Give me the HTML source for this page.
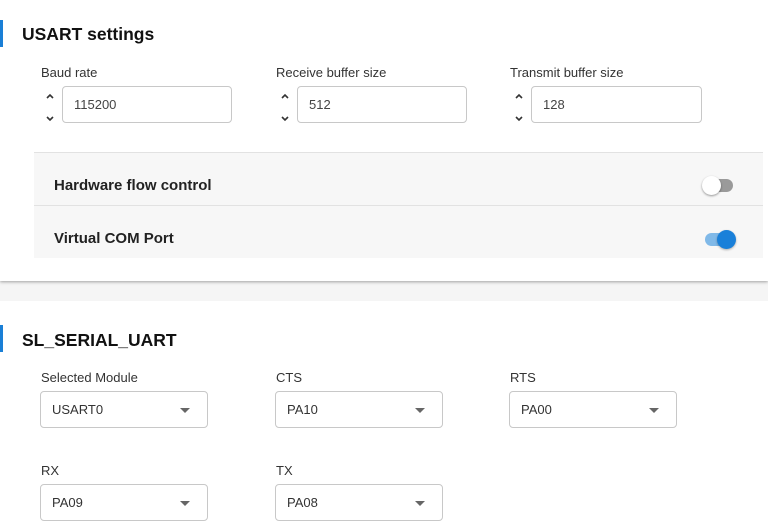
<!DOCTYPE html>
<html><head><style>
*{box-sizing:border-box;margin:0;padding:0}
body{width:768px;height:521px;overflow:hidden;background:#f5f5f5;font-family:"Liberation Sans",sans-serif;color:#222;position:relative}
.card{position:absolute;left:0;width:768px;background:#fff}
.bar{position:absolute;left:0;width:3px;background:#1a7fd6}
.title{position:absolute;left:22px;font-size:17.5px;font-weight:bold;color:#111}
.lbl{position:absolute;font-size:13px;color:#333}
.inp{position:absolute;height:37px;border:1px solid #c8c8c8;border-radius:4px;font-size:13px;color:#444;padding:10px 0 0 11px;background:#fff}
.spin{position:absolute;width:10px;height:34px}
.sel{position:absolute;width:168px;height:37px;border:1px solid #c8c8c8;border-radius:4px;font-size:13px;color:#333;padding:10px 0 0 11px;background:#fff}
.sel:after{content:"";position:absolute;right:17px;top:16px;border-left:5px solid transparent;border-right:5px solid transparent;border-top:5px solid #666}
.row{position:absolute;left:34px;width:729px;background:#f7f7f7;font-size:15px;font-weight:bold;color:#222;padding-left:20px}
</style></head><body>
<div class="card" style="top:0;height:281px;box-shadow:0 1px 3px rgba(0,0,0,.35)">
<div class="bar" style="top:20px;height:27px"></div>
<div class="title" style="top:24px">USART settings</div>
<div class="lbl" style="left:41px;top:65px">Baud rate</div>
<div class="lbl" style="left:276px;top:65px">Receive buffer size</div>
<div class="lbl" style="left:510px;top:65px">Transmit buffer size</div>
<svg class="spin" style="left:45px;top:88px" viewBox="0 0 10 34"><path d="M2 10l3-3 3 3M2 29l3 3 3-3" fill="none" stroke="#333" stroke-width="1.6"/></svg>
<svg class="spin" style="left:280px;top:88px" viewBox="0 0 10 34"><path d="M2 10l3-3 3 3M2 29l3 3 3-3" fill="none" stroke="#333" stroke-width="1.6"/></svg>
<svg class="spin" style="left:514px;top:88px" viewBox="0 0 10 34"><path d="M2 10l3-3 3 3M2 29l3 3 3-3" fill="none" stroke="#333" stroke-width="1.6"/></svg>
<div class="inp" style="left:62px;top:86px;width:170px">115200</div>
<div class="inp" style="left:297px;top:86px;width:170px">512</div>
<div class="inp" style="left:531px;top:86px;width:171px">128</div>
<div class="row" style="top:152px;height:54px;border-top:1px solid #e2e2e2;border-bottom:1px solid #e2e2e2;padding-top:24px">Hardware flow control
<div style="position:absolute;left:671px;top:26px;width:28px;height:13px;border-radius:7px;background:#9a9a9a"></div>
<div style="position:absolute;left:668px;top:23px;width:19px;height:19px;border-radius:50%;background:#fff;box-shadow:0 1px 2px rgba(0,0,0,.4)"></div></div>
<div class="row" style="top:206px;height:52px;padding-top:24px">Virtual COM Port
<div style="position:absolute;left:671px;top:27px;width:28px;height:13px;border-radius:7px;background:#80b9e8"></div>
<div style="position:absolute;left:683px;top:24px;width:19px;height:19px;border-radius:50%;background:#1a80d9;box-shadow:0 1px 2px rgba(0,0,0,.3)"></div></div>
</div>
<div class="card" style="top:301px;height:220px">
<div class="bar" style="top:24px;height:27px"></div>
<div class="title" style="top:29px">SL_SERIAL_UART</div>
<div class="lbl" style="left:41px;top:69px">Selected Module</div>
<div class="lbl" style="left:276px;top:69px">CTS</div>
<div class="lbl" style="left:510px;top:69px">RTS</div>
<div class="sel" style="left:40px;top:90px">USART0</div>
<div class="sel" style="left:275px;top:90px">PA10</div>
<div class="sel" style="left:509px;top:90px">PA00</div>
<div class="lbl" style="left:41px;top:162px">RX</div>
<div class="lbl" style="left:276px;top:162px">TX</div>
<div class="sel" style="left:40px;top:183px">PA09</div>
<div class="sel" style="left:275px;top:183px">PA08</div>
</div>
</body></html>
